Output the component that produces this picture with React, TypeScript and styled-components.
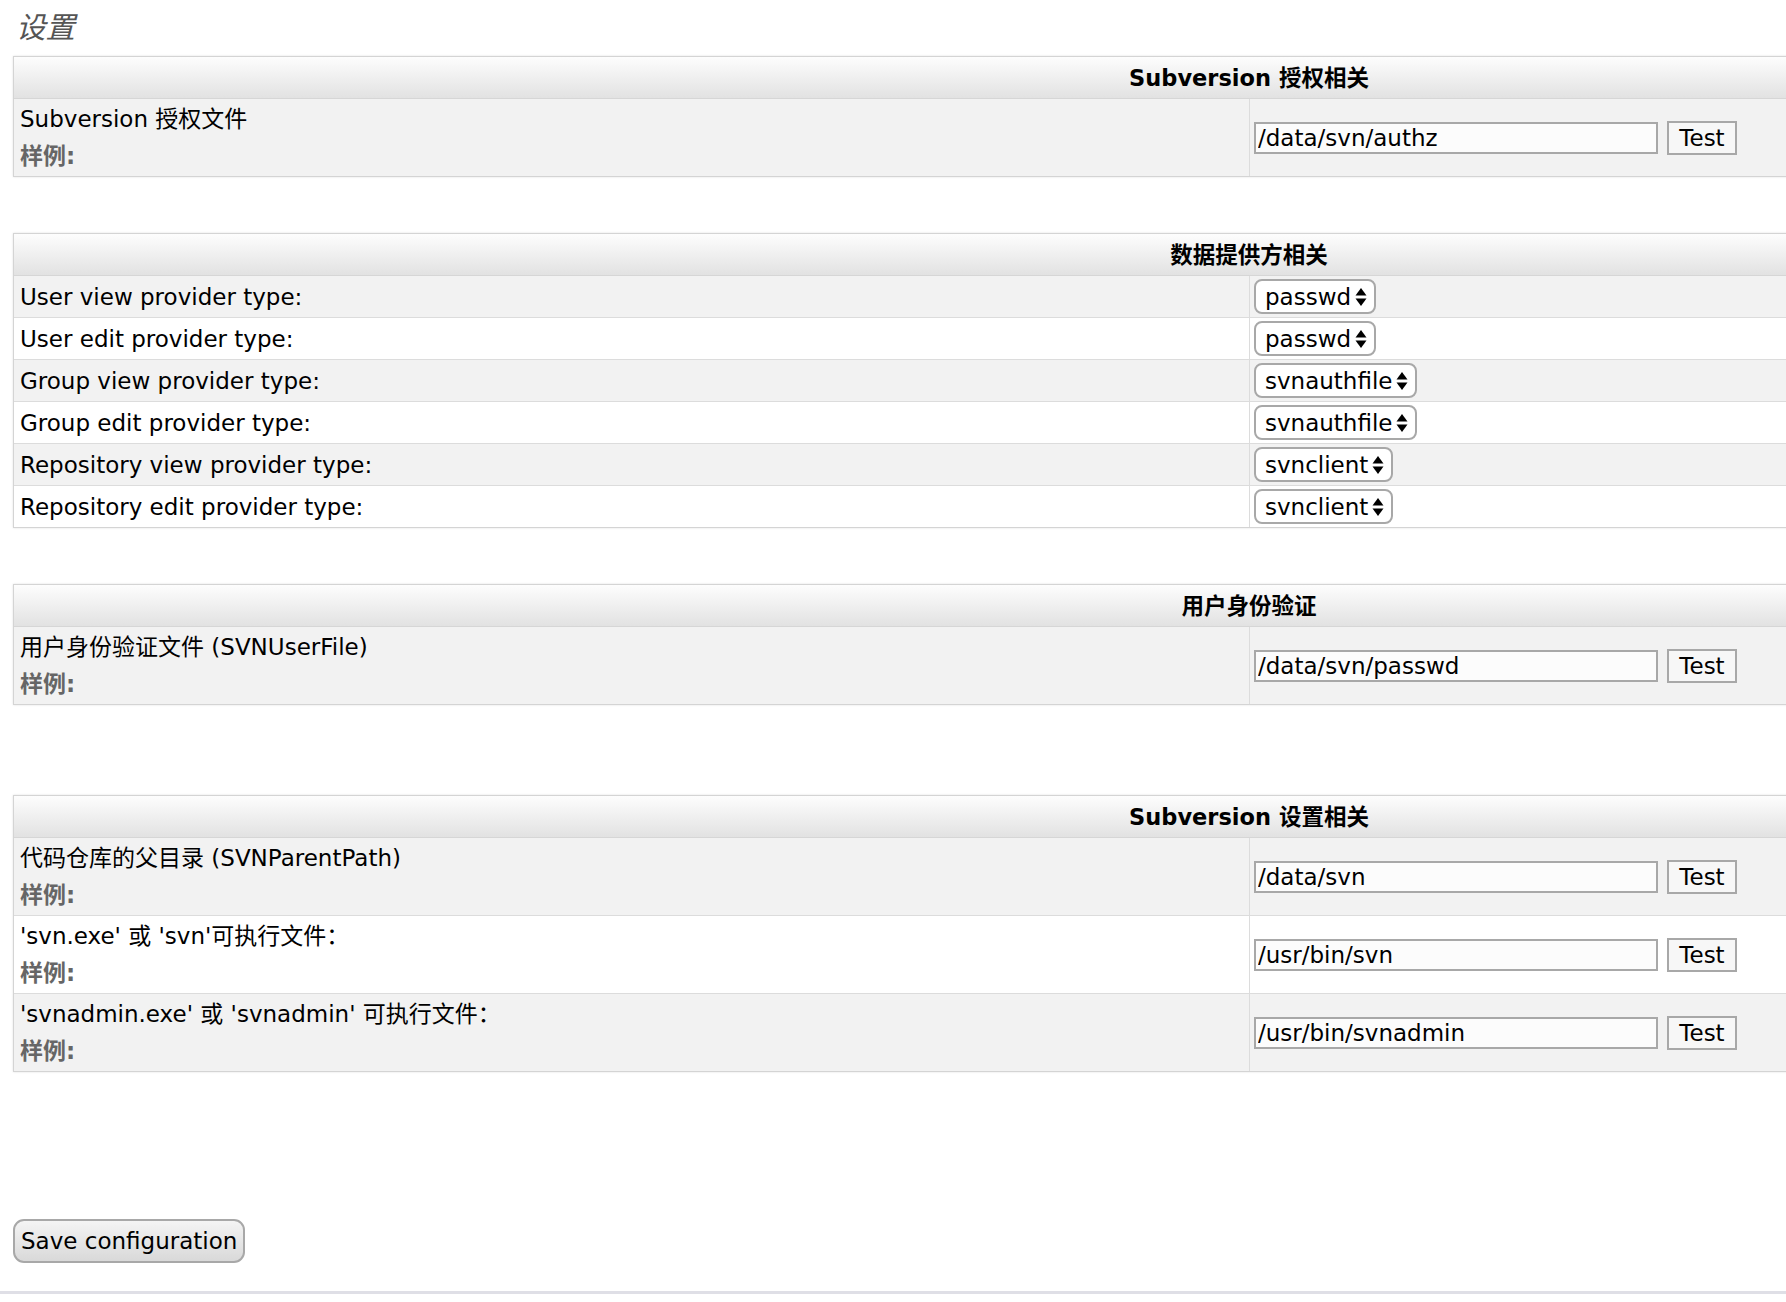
import React from "react";
import styled, { createGlobalStyle } from "styled-components";

const GlobalStyle = createGlobalStyle`
  html, body {
    margin: 0;
    padding: 0;
    background: #fff;
    overflow-x: hidden;
  }
  body {
    font-family: "DejaVu Sans", "Noto Sans CJK SC", sans-serif;
    font-size: 23px;
    color: #000;
  }
`;

const Page = styled.div`
  padding: 14px 0 0 13px;
`;

const Title = styled.h2`
  margin: 0 0 13px 3px;
  font-size: 29.5px;
  line-height: 29px;
  font-style: italic;
  font-weight: normal;
  color: #555;
`;

const Section = styled.div<{ $gap: number }>`
  width: 2470px;
  margin-bottom: ${(p) => p.$gap}px;
  border: 1px solid #d4d4d4;
  box-shadow: 0 0 2px rgba(0, 0, 0, 0.12);
`;

const SectionHeader = styled.div`
  box-sizing: border-box;
  height: 42px;
  padding-bottom: 3px;
  border-bottom: 1px solid #d6d6d6;
  background: linear-gradient(#fdfdfd, #e2e2e2);
  display: flex;
  align-items: center;
  justify-content: center;
  font-weight: bold;
  font-size: 22.5px;
`;

const Row = styled.div<{ $alt: boolean; $tall: boolean }>`
  display: grid;
  grid-template-columns: 1236px 1fr;
  height: ${(p) => (p.$tall ? 77 : 41)}px;
  background: ${(p) => (p.$alt ? "#fff" : "#f2f2f2")};
  & + & {
    border-top: 1px solid #dcdcdc;
  }
`;

const LabelCell = styled.div<{ $tall: boolean }>`
  box-sizing: border-box;
  border-right: 1px solid #dcdcdc;
  padding: 0 6px;
  display: flex;
  flex-direction: column;
  justify-content: center;
  line-height: ${(p) => (p.$tall ? 37 : 34)}px;
  white-space: nowrap;
`;

const Sample = styled.div`
  font-weight: bold;
  color: #666;
`;

const ValueCell = styled.div`
  display: flex;
  align-items: center;
  gap: 9px;
  padding-left: 4px;
`;

const PathInput = styled.input`
  box-sizing: border-box;
  width: 404px;
  height: 32px;
  border: 2px solid #a8a8a8;
  background: #fcfcfc;
  font: inherit;
  font-size: 23px;
  padding: 0 2px;
  color: #000;
  outline: none;
`;

const TestButton = styled.button`
  box-sizing: border-box;
  width: 70px;
  height: 34px;
  border: 2px solid #a8a8a8;
  border-radius: 0;
  background: #f7f7f7;
  font: inherit;
  font-size: 23px;
  color: #000;
  padding: 0;
`;

const SelectBox = styled.div`
  box-sizing: border-box;
  display: inline-flex;
  align-items: center;
  gap: 4px;
  height: 35px;
  border: 2px solid #a8a8a8;
  border-radius: 8px;
  background: #fff;
  padding: 0 7px 0 9px;
`;

const SaveButton = styled.button`
  box-sizing: border-box;
  height: 44px;
  padding: 0 6px;
  border: 2px solid #a8a8a8;
  border-radius: 11px;
  background: linear-gradient(#f4f4f4, #d9d9d9);
  font: inherit;
  font-size: 23px;
  color: #000;
`;

const Footer = styled.div`
  margin-top: 28px;
  border-top: 3px solid #dfdfe6;
  height: 4px;
`;

const Arrows = () => (
  <svg width="12" height="18" viewBox="0 0 12 18">
    <path d="M6 0 L11.5 7.5 H0.5 Z" fill="#000" />
    <path d="M0.5 10.5 H11.5 L6 18 Z" fill="#000" />
  </svg>
);

type Item =
  | { kind: "path"; label: string; value: string }
  | { kind: "select"; label: string; value: string };

const sections: { title: string; gap: number; items: Item[] }[] = [
  {
    title: "Subversion 授权相关",
    gap: 56,
    items: [{ kind: "path", label: "Subversion 授权文件", value: "/data/svn/authz" }],
  },
  {
    title: "数据提供方相关",
    gap: 56,
    items: [
      { kind: "select", label: "User view provider type:", value: "passwd" },
      { kind: "select", label: "User edit provider type:", value: "passwd" },
      { kind: "select", label: "Group view provider type:", value: "svnauthfile" },
      { kind: "select", label: "Group edit provider type:", value: "svnauthfile" },
      { kind: "select", label: "Repository view provider type:", value: "svnclient" },
      { kind: "select", label: "Repository edit provider type:", value: "svnclient" },
    ],
  },
  {
    title: "用户身份验证",
    gap: 90,
    items: [
      { kind: "path", label: "用户身份验证文件 (SVNUserFile)", value: "/data/svn/passwd" },
    ],
  },
  {
    title: "Subversion 设置相关",
    gap: 147,
    items: [
      { kind: "path", label: "代码仓库的父目录 (SVNParentPath)", value: "/data/svn" },
      { kind: "path", label: "'svn.exe' 或 'svn'可执行文件：", value: "/usr/bin/svn" },
      {
        kind: "path",
        label: "'svnadmin.exe' 或 'svnadmin' 可执行文件：",
        value: "/usr/bin/svnadmin",
      },
    ],
  },
];

export default function App() {
  return (
    <>
      <GlobalStyle />
      <Page>
        <Title>设置</Title>
        {sections.map((s) => (
          <Section key={s.title} $gap={s.gap}>
            <SectionHeader>{s.title}</SectionHeader>
            {s.items.map((item, i) => {
              const tall = item.kind === "path";
              return (
                <Row key={item.label} $alt={i % 2 === 1} $tall={tall}>
                  <LabelCell $tall={tall}>
                    <div>{item.label}</div>
                    {tall && <Sample>样例:</Sample>}
                  </LabelCell>
                  <ValueCell>
                    {tall ? (
                      <>
                        <PathInput defaultValue={item.value} />
                        <TestButton>Test</TestButton>
                      </>
                    ) : (
                      <SelectBox>
                        <span>{item.value}</span>
                        <Arrows />
                      </SelectBox>
                    )}
                  </ValueCell>
                </Row>
              );
            })}
          </Section>
        ))}
        <SaveButton>Save configuration</SaveButton>
      </Page>
      <Footer />
    </>
  );
}
